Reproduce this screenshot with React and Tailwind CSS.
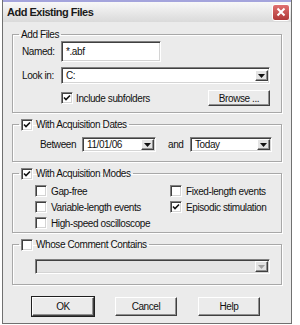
import React from "react";

function Check({ checked }) {
    return (
        <span className="w-[12px] h-[12px] shrink-0 bg-white border border-t-[#808080] border-l-[#808080] border-b-white border-r-white shadow-[inset_1px_1px_0_#404040,inset_-1px_-1px_0_#d4d4d4] flex items-center justify-center">
            {checked && (
                <svg width="8" height="8" viewBox="0 0 8 8">
                    <polyline points="1,3.5 3,5.5 7,1.5" fill="none" stroke="#111" strokeWidth="1.6" />
                </svg>
            )}
        </span>
    );
}

function Arrow({ disabled }) {
    return (
        <span className="w-[13px] h-[11px] mr-[1px] shrink-0 bg-[#e4e4e4] border border-t-white border-l-white border-b-[#404040] border-r-[#404040] shadow-[inset_-1px_-1px_0_#909090] flex items-center justify-center">
            <svg width="7" height="4" viewBox="0 0 7 4">
                <polygon points="0,0 7,0 3.5,4" fill={disabled ? "#a0a0a0" : "#111"} />
            </svg>
        </span>
    );
}

function Combo({ value, className, disabled }) {
    return (
        <div
            className={`flex items-center border border-t-[#808080] border-l-[#808080] border-b-white border-r-white shadow-[inset_1px_1px_0_#404040,inset_-1px_-1px_0_#d4d4d4] ${
                disabled ? "bg-[#e4e4e4]" : "bg-white"
            } ${className}`}
        >
            <span className="flex-1 pl-[4px]">{value}</span>
            <Arrow disabled={disabled} />
        </div>
    );
}

function Button({ children, isDefault }) {
    return (
        <div
            className={`w-[62px] h-[19px] flex items-center justify-center bg-[#ebebeb] border border-t-white border-l-white border-b-[#404040] border-r-[#404040] shadow-[inset_-1px_-1px_0_#909090] ${
                isDefault ? "outline outline-1 outline-[#202020]" : ""
            }`}
        >
            {children}
        </div>
    );
}

function Group({ legend, children, className }) {
    return (
        <fieldset
            className={`border border-[#a8a8a8] shadow-[inset_1px_1px_0_#fff,1px_1px_0_#fff] ${className}`}
        >
            <legend className="ml-[6px] px-[2px] leading-[13px] flex items-center gap-[3px]">
                {legend}
            </legend>
            {children}
        </fieldset>
    );
}

export default function App() {
    return (
        <div className="w-[300px] h-[325px] bg-white font-['Liberation_Sans',Arial,sans-serif] text-[10px] tracking-[-0.4px] text-[#111]">
            <div className="ml-[2px] w-[290px] h-[324px] bg-[#ebebeb] border-l border-r border-b border-[#707070] flex flex-col">
                {/* Title bar */}
                <div className="h-[22px] border-t-2 border-[#a4a4dc] bg-gradient-to-b from-[#f8f8f8] to-[#dadada] flex items-center justify-between pl-[4px] pr-[1px]">
                    <span className="font-bold text-[11px] tracking-[-0.5px] text-[#1a1a1a]">
                        Add Existing Files
                    </span>
                    <span className="w-[18px] h-[17px] rounded-[3px] border border-white bg-gradient-to-b from-[#e07070] to-[#b03838] flex items-center justify-center">
                        <svg width="10" height="10" viewBox="0 0 10 10">
                            <path d="M1.5 1.5 L8.5 8.5 M8.5 1.5 L1.5 8.5" stroke="#fff" strokeWidth="2" />
                        </svg>
                    </span>
                </div>

                <div className="flex flex-col px-[9px] pt-[6px]">
                    {/* Add Files */}
                    <Group legend={<span>Add Files</span>} className="pb-[6px]">
                        <div className="flex items-center h-[21px]">
                            <span className="w-[48px] pl-[9px]">Named:</span>
                            <div className="w-[100px] h-[21px] flex items-center pl-[4px] bg-white border border-t-[#808080] border-l-[#808080] border-b-white border-r-white shadow-[inset_1px_1px_0_#404040,inset_-1px_-1px_0_#d4d4d4]">
                                *.abf
                            </div>
                        </div>
                        <div className="flex items-center mt-[5px]">
                            <span className="w-[48px] pl-[9px]">Look in:</span>
                            <Combo value="C:" className="w-[209px] h-[17px]" />
                        </div>
                        <div className="flex items-center mt-[6px] h-[16px]">
                            <span className="w-[48px]" />
                            <Check checked />
                            <span className="ml-[3px] flex-1">Include subfolders</span>
                            <div className="w-[62px] h-[16px] mr-[11px] flex items-center justify-center bg-[#ebebeb] border border-t-white border-l-white border-b-[#404040] border-r-[#404040] shadow-[inset_-1px_-1px_0_#909090]">
                                Browse ...
                            </div>
                        </div>
                    </Group>

                    {/* With Acquisition Dates */}
                    <Group
                        legend={
                            <>
                                <Check checked />
                                <span>With Acquisition Dates</span>
                            </>
                        }
                        className="mt-[5px] pb-[9px]"
                    >
                        <div className="flex items-center mt-[6px] h-[15px]">
                            <span className="w-[69px] pl-[27px]">Between</span>
                            <Combo value="11/01/06" className="w-[74px] h-[15px]" />
                            <span className="ml-[12px] w-[22px]">and</span>
                            <Combo value="Today" className="w-[82px] h-[15px]" />
                        </div>
                    </Group>

                    {/* With Acquisition Modes */}
                    <Group
                        legend={
                            <>
                                <Check checked />
                                <span>With Acquisition Modes</span>
                            </>
                        }
                        className="mt-[5px] pb-[1px]"
                    >
                        <div className="grid grid-cols-[135px_1fr] pl-[22px] pt-[3px]">
                            <div className="flex items-center h-[16px] gap-[4px]">
                                <Check />
                                <span>Gap-free</span>
                            </div>
                            <div className="flex items-center h-[16px] gap-[4px]">
                                <Check />
                                <span>Fixed-length events</span>
                            </div>
                            <div className="flex items-center h-[16px] gap-[4px]">
                                <Check />
                                <span>Variable-length events</span>
                            </div>
                            <div className="flex items-center h-[16px] gap-[4px]">
                                <Check checked />
                                <span>Episodic stimulation</span>
                            </div>
                            <div className="flex items-center h-[16px] gap-[4px]">
                                <Check />
                                <span>High-speed oscilloscope</span>
                            </div>
                        </div>
                    </Group>

                    {/* Whose Comment Contains */}
                    <Group
                        legend={
                            <>
                                <Check />
                                <span>Whose Comment Contains</span>
                            </>
                        }
                        className="mt-[5px] pb-[10px]"
                    >
                        <div className="pl-[22px] pr-[11px] mt-[8px]">
                            <Combo disabled value="" className="h-[15px]" />
                        </div>
                    </Group>

                    {/* Buttons */}
                    <div className="flex gap-[21px] pl-[20px] mt-[12px]">
                        <Button isDefault>OK</Button>
                        <Button>Cancel</Button>
                        <Button>Help</Button>
                    </div>
                </div>
            </div>
        </div>
    );
}
